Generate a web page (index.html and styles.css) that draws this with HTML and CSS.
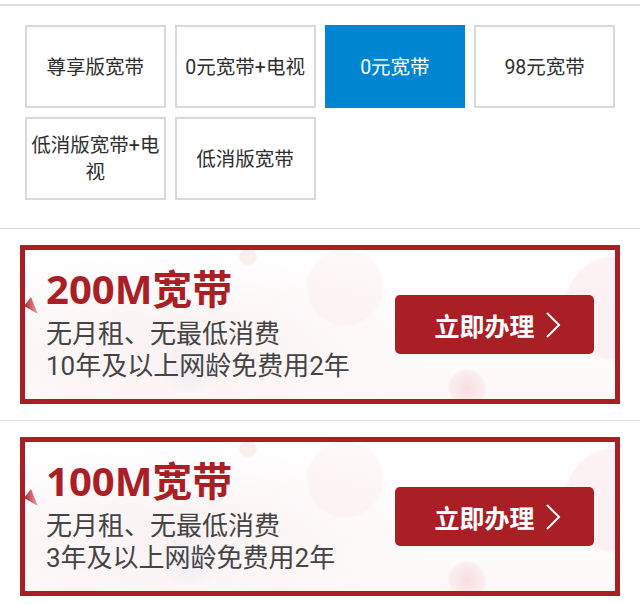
FILE: index.html
```html
<!DOCTYPE html>
<html lang="zh-CN">
<head>
<meta charset="utf-8">
<title>宽带</title>
<link rel="stylesheet" href="styles.css">
</head>
<body>
<div class="top-rule"></div>
<section class="tabs">
  <div class="tab">尊享版宽带</div>
  <div class="tab">0元宽带+电视</div>
  <div class="tab tab-active">0元宽带</div>
  <div class="tab">98元宽带</div>
  <div class="tab">低消版宽带+电视</div>
  <div class="tab">低消版宽带</div>
</section>
<section class="offer">
  <div class="card">
    <svg class="dart" width="16" height="20" viewBox="0 0 16 20">
      <defs>
        <linearGradient id="dg1" x1="0" y1="0" x2="1" y2="0">
          <stop offset="0" stop-color="#a9232b"/>
          <stop offset="1" stop-color="#e9a6ab"/>
        </linearGradient>
      </defs>
      <polygon points="7,1 0,10 14,18" fill="url(#dg1)"/>
    </svg>
    <div class="info">
      <div class="title">200M宽带</div>
      <div class="line">无月租、无最低消费</div>
      <div class="line">10年及以上网龄免费用2年</div>
    </div>
    <a class="apply">立即办理<svg class="chev" width="16" height="26" viewBox="0 0 16 26"><polyline points="2,1 14,13 2,25" fill="none" stroke="#fff" stroke-width="2"/></svg></a>
  </div>
</section>
<section class="offer">
  <div class="card">
    <svg class="dart" width="16" height="20" viewBox="0 0 16 20">
      <defs>
        <linearGradient id="dg2" x1="0" y1="0" x2="1" y2="0">
          <stop offset="0" stop-color="#a9232b"/>
          <stop offset="1" stop-color="#e9a6ab"/>
        </linearGradient>
      </defs>
      <polygon points="7,1 0,10 14,18" fill="url(#dg2)"/>
    </svg>
    <div class="info">
      <div class="title">100M宽带</div>
      <div class="line">无月租、无最低消费</div>
      <div class="line">3年及以上网龄免费用2年</div>
    </div>
    <a class="apply">立即办理<svg class="chev" width="16" height="26" viewBox="0 0 16 26"><polyline points="2,1 14,13 2,25" fill="none" stroke="#fff" stroke-width="2"/></svg></a>
  </div>
</section>
</body>
</html>
```
FILE: styles.css
```css
html, body {
  margin: 0;
  padding: 0;
  background: #fff;
  overflow: hidden;
}
body {
  font-family: Roboto, "Noto Sans CJK SC", sans-serif;
  color: #333;
}
.top-rule {
  height: 4px;
  border-bottom: 2px solid #dedede;
}
.tabs {
  display: grid;
  grid-template-columns: repeat(4, 1fr);
  grid-auto-rows: 83px;
  column-gap: 9px;
  row-gap: 9px;
  padding: 19px 25px 28px;
  border-bottom: 1px solid #dcdcdc;
}
.tab {
  display: flex;
  align-items: center;
  justify-content: center;
  text-align: center;
  box-sizing: border-box;
  border: 2px solid #d9d9d9;
  padding: 1px 2px 0;
  font-size: 19.5px;
  line-height: 27px;
  color: #2e2e2e;
}
.tab-active {
  background: #0086d1;
  border-color: #0086d1;
  color: #fff;
}
.offer {
  padding: 16px 20px;
  border-bottom: 1px solid #e2e2e2;
}
.card {
  position: relative;
  box-sizing: border-box;
  height: 159px;
  border: 5px solid #aa1f26;
  display: flex;
  align-items: flex-start;
  justify-content: space-between;
  padding: 15px 21px 0 21px;
  background:
    radial-gradient(circle 9px at 223px 6px, rgba(242,200,204,0.3) 0 8px, rgba(242,200,204,0) 9.5px),
    radial-gradient(circle 39px at 320px 37px, rgba(247,218,222,0.2) 0 37px, rgba(247,218,222,0) 39.5px),
    radial-gradient(circle 53px at 592px 58px, rgba(247,214,218,0.3) 0 51px, rgba(247,214,218,0) 53.5px),
    radial-gradient(circle 19px at 442px 138px, rgba(240,196,201,0.5) 0, rgba(248,224,226,0.45) 17px, rgba(248,224,226,0) 19.5px),
    radial-gradient(circle 30px at 165px 118px, rgba(210,222,235,0.3), rgba(210,222,235,0) 30px),
    radial-gradient(ellipse 260px 90px at 150px 90px, rgba(246,232,234,0.5), rgba(255,255,255,0) 100%),
    linear-gradient(180deg, #fff 0%, #fdf9f9 100%);
}
.dart {
  position: absolute;
  left: -1px;
  top: 46px;
}
.info {
  display: flex;
  flex-direction: column;
}
.title {
  font-family: "Noto Sans", "Noto Sans CJK SC", sans-serif;
  font-size: 40px;
  font-weight: 700;
  line-height: 48px;
  color: #aa1f26;
}
.line {
  font-size: 26px;
  line-height: 32px;
  color: #444;
}
.title + .line {
  margin-top: 5px;
}
.apply {
  align-self: center;
  margin-top: -15px;
  width: 199px;
  height: 59px;
  box-sizing: border-box;
  border-radius: 5px;
  background: #aa1f26;
  color: #fff;
  display: flex;
  align-items: center;
  justify-content: center;
  gap: 10px;
  padding-left: 6px;
  font-size: 25px;
  font-weight: 700;
  text-decoration: none;
}
.chev {
  display: block;
}
```
